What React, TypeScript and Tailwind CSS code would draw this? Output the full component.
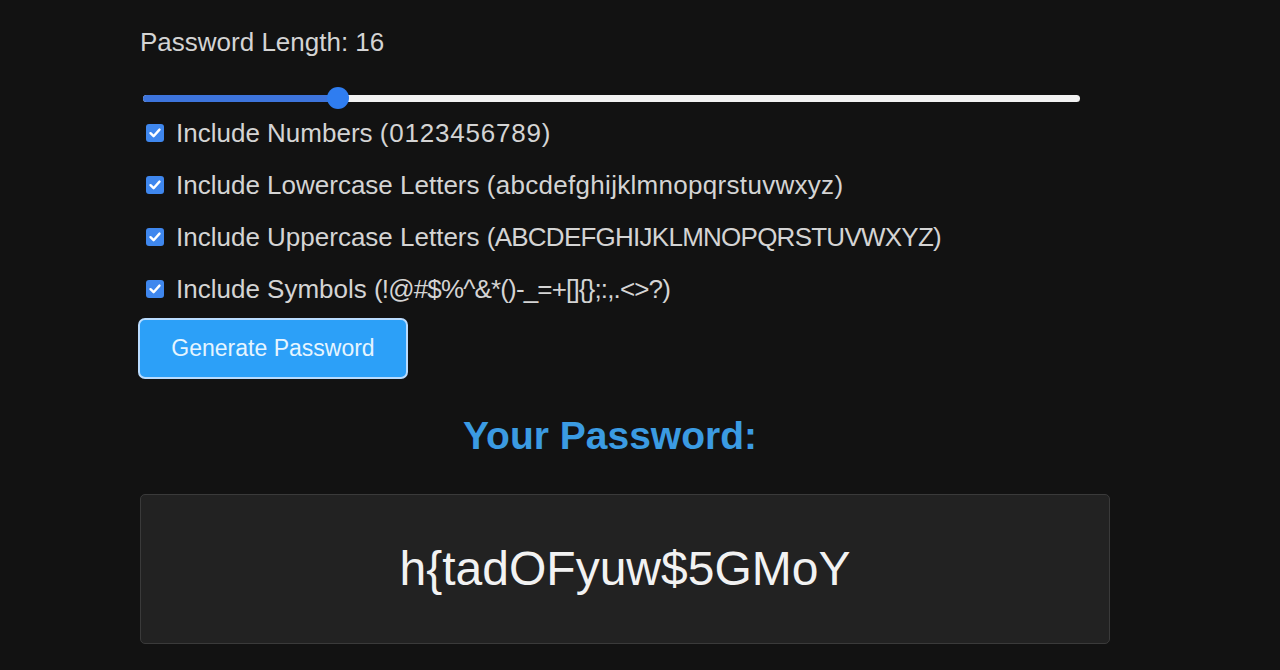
import React from "react";

const font = { fontFamily: '"Liberation Sans", Arial, sans-serif' };

function Check({ label, chars, track }: { label: string; chars: string; track: string }) {
  return (
    <div className="flex items-center h-[30px]">
      <div className="ml-[6px] w-[18px] h-[18px] rounded-[3px] bg-[#3f87ee] flex items-center justify-center">
        <svg width="14" height="14" viewBox="0 0 14 14">
          <path d="M2.5 7.2 L5.6 10.2 L11.5 3.6" fill="none" stroke="#ffffff" strokeWidth="2.4" strokeLinecap="round" strokeLinejoin="round" />
        </svg>
      </div>
      <span className="ml-[12px] text-[26px] leading-[30px] text-[#d4d4d4] whitespace-nowrap">
        {label}
        <span className={track}>{chars}</span>
      </span>
    </div>
  );
}

export default function App() {
  return (
    <div className="min-h-screen w-full bg-[#121212] overflow-hidden" style={font}>
      <div className="pl-[140px] pt-[27px] w-[1110px]">
        <div className="text-[26px] leading-[30px] text-[#d4d4d4]">Password Length: 16</div>
        <div className="relative mt-[30px] w-[940px] h-[22px] flex items-center">
          <div className="ml-[3px] w-[938px] h-[7px] rounded-full bg-[#f2f2f2] overflow-hidden flex">
            <div className="w-[195px] h-full bg-[#3d74dc]" />
          </div>
          <div className="absolute left-[187px] top-0 w-[22px] h-[22px] rounded-full bg-[#2f7df0]" />
        </div>
        <div className="mt-[9px] flex flex-col gap-[22px]">
          <Check label="Include Numbers " chars="(0123456789)" track="tracking-[0.8px]" />
          <Check label="Include Lowercase Letters " chars="(abcdefghijklmnopqrstuvwxyz)" track="tracking-[0.3px]" />
          <Check label="Include Uppercase Letters " chars="(ABCDEFGHIJKLMNOPQRSTUVWXYZ)" track="tracking-[-0.75px]" />
          <Check label="Include Symbols " chars="(!@#$%^&*()-_=+[]{};:,.<>?)" track="tracking-[-0.85px]" />
        </div>
        <button className="mt-[14px] -ml-[2px] w-[270px] h-[61px] rounded-[7px] bg-[#2ca0f8] border-2 border-[#b9dcff] text-[23px] text-[#e6f5ff] flex items-center justify-center" style={font}>
          Generate Password
        </button>
        <h2 className="mt-[34px] w-[940px] text-center text-[39px] leading-[46px] font-bold text-[#3b9be2]">Your Password:</h2>
        <div className="mt-[35px] w-[970px] h-[150px] rounded-[5px] bg-[#222222] border border-[#3a3a3a] flex items-center justify-center">
          <span className="text-[48px] leading-[56px] text-[#f2f2f2]">h{"{"}tadOFyuw$5GMoY</span>
        </div>
      </div>
    </div>
  );
}
